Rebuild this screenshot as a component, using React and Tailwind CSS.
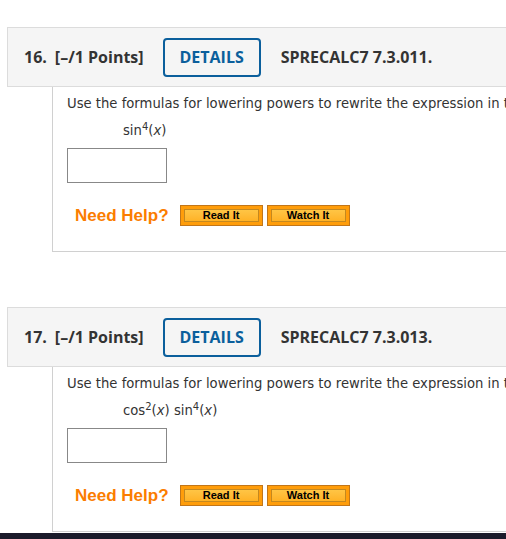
import React from 'react';

const HelpButton = ({ label }) => (
  <div className="w-[83px] h-[21px] border border-[#c27619] bg-[#ff9d0a] p-[3px]">
    <div className="h-full border border-[#c4881f] bg-gradient-to-b from-[#ffc545] to-[#ffb225] flex items-center justify-center text-[11px] font-bold text-black leading-none" style={{ fontFamily: '"Liberation Sans", Arial, sans-serif' }}>
      {label}
    </div>
  </div>
);

const Question = ({ num, code, expr }) => (
  <div className="w-[600px]">
    <div className="h-[60px] border border-[#dcdcdc] bg-[#f5f5f5] flex items-center pl-[16px] text-[16px] font-bold text-[#333]" style={{ fontFamily: '"Open Sans", sans-serif' }}>
      <span>{num}.</span>
      <span className="ml-[8px]">[–/1 Points]</span>
      <div className="ml-[19px] w-[98px] h-[39px] border-2 border-[#0b5f9c] rounded-[4px] flex items-center justify-center text-[#0b5f9c]">
        DETAILS
      </div>
      <span className="ml-[20px]">{code}</span>
    </div>
    <div className="ml-[45px] h-[165px] border-l border-b border-[#d0d0d0] pl-[14px] pt-[10px] text-[#333]" style={{ fontFamily: 'Verdana, "DejaVu Sans", sans-serif' }}>
      <p className="text-[13.2px] leading-[14px] whitespace-nowrap">
        Use the formulas for lowering powers to rewrite the expression in terms of the first power of cosine.
      </p>
      <p className="mt-[13px] ml-[56px] text-[13.2px] leading-[14px]">{expr}</p>
      <div className="mt-[10px] w-[100px] h-[35px] border border-[#888] bg-white" />
      <div className="mt-[20px] ml-[8px] flex items-center">
        <span className="text-[17px] font-bold text-[#fb7d00]" style={{ fontFamily: '"Liberation Sans", Arial, sans-serif' }}>Need Help?</span>
        <div className="ml-[11px] flex gap-[4px]">
          <HelpButton label="Read It" />
          <HelpButton label="Watch It" />
        </div>
      </div>
    </div>
  </div>
);

export default function App() {
  return (
    <div className="w-[506px] h-[539px] overflow-hidden bg-white relative flex flex-col">
      <div className="pl-[7px] pt-[27px] flex flex-col gap-[55px] flex-1">
        <Question
          num="16"
          code="SPRECALC7 7.3.011."
          expr={<>sin<sup className="text-[10px]">4</sup>(<i>x</i>)</>}
        />
        <Question
          num="17"
          code="SPRECALC7 7.3.013."
          expr={<>cos<sup className="text-[10px]">2</sup>(<i>x</i>) sin<sup className="text-[10px]">4</sup>(<i>x</i>)</>}
        />
      </div>
      <div className="h-[6px] bg-[#1b1b2b]" />
    </div>
  );
}
